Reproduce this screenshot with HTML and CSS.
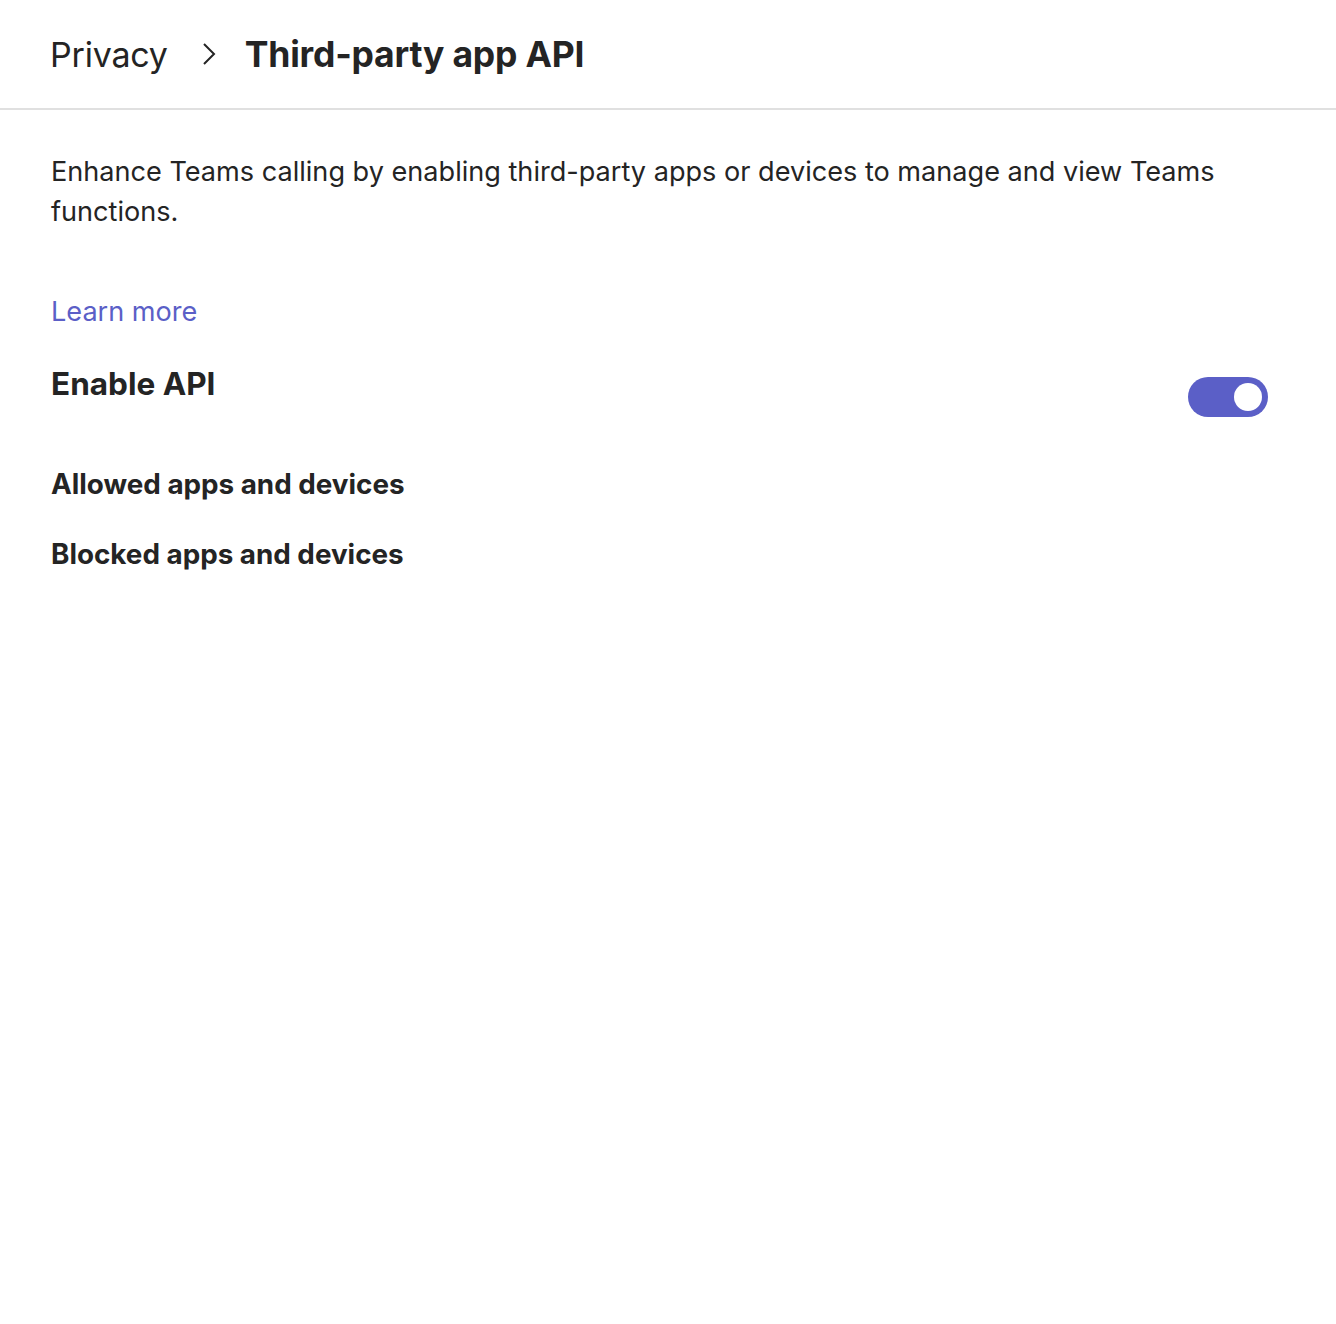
FILE: index.html
```html
<!DOCTYPE html>
<html lang="en">
<head>
<meta charset="utf-8">
<title>Third-party app API</title>
<link rel="stylesheet" href="styles.css">
</head>
<body>
<header class="header">
  <span class="crumb">Privacy</span>
  <svg class="chev" width="16" height="28" viewBox="0 0 16 28"><path d="M3 4 L13 14 L3 24" fill="none" stroke="#242424" stroke-width="2"/></svg>
  <h1 class="title">Third-party app API</h1>
</header>
<main class="content">
  <p class="desc">Enhance Teams calling by enabling third-party apps or devices to manage and view Teams functions.</p>
  <a class="link" href="#">Learn more</a>
  <div class="row">
    <h2 class="enable">Enable API</h2>
    <div class="toggle"><span class="knob"></span></div>
  </div>
  <div class="item">Allowed apps and devices</div>
  <div class="item">Blocked apps and devices</div>
</main>
</body>
</html>
```
FILE: styles.css
```css
* { box-sizing: border-box; }
html, body { margin: 0; padding: 0; background: #fff; }
body { font-family: Inter, "Noto Sans", sans-serif; color: #242424; }
.header {
  display: flex;
  align-items: center;
  height: 110px;
  padding: 0 50px;
  border-bottom: 2px solid #e0e0e0;
}
.crumb { font-size: 34px; font-weight: 400; letter-spacing: -0.2px; }
.chev { margin: 0 28px 0 33px; }
.title { margin: 0; font-size: 35.5px; font-weight: 700; letter-spacing: -0.2px; }
.content { padding: 42px 50px 0 51px; }
.desc { margin: 0; font-size: 27.1px; line-height: 40px; width: 1200px; }
.link { display: block; margin-top: 60px; color: #5b5fc7; text-decoration: none; font-size: 27.1px; line-height: 40px; }
.row { display: flex; justify-content: space-between; align-items: flex-start; margin-top: 32px; padding-right: 18px; }
.enable { margin: 0; font-size: 31.5px; font-weight: 700; line-height: 40px; }
.toggle {
  margin-top: 13px;
  width: 80px; height: 40px;
  border-radius: 20px;
  background: #5b5fc7;
  display: flex; align-items: center; justify-content: flex-end;
  padding-right: 6px;
}
.knob { width: 28px; height: 28px; border-radius: 50%; background: #fff; }
.item { font-size: 27.8px; font-weight: 700; line-height: 40px; margin-top: 47px; }
.item + .item { margin-top: 30px; }
```
